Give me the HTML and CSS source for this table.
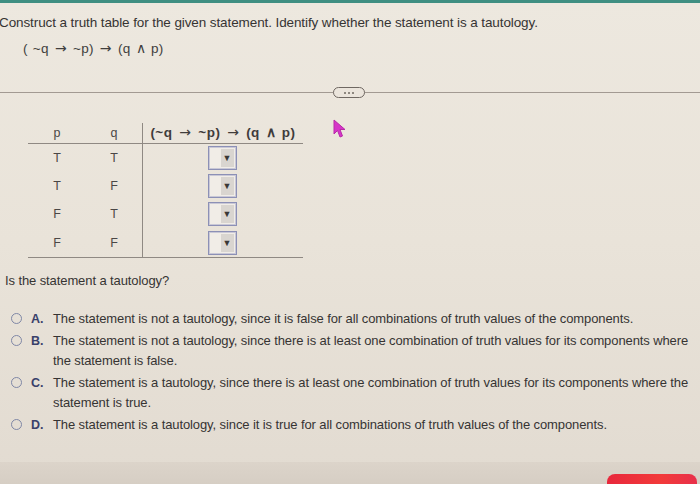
FILE: index.html
```html
<!DOCTYPE html>
<html>
<head>
<meta charset="utf-8">
<link rel="stylesheet" href="styles.css">
</head>
<body>
<div class="topbar"></div>
<div class="page">
  <p class="title">Construct a truth table for the given statement. Identify whether the statement is a tautology.</p>
  <p class="formula">( ~q <span class="ar">→</span> ~p) <span class="ar">→</span> (q ∧ p)</p>
  <div class="divider"><span class="pill"><i></i><i></i><i></i></span></div>
  <div class="table-wrap">
    <table class="truth">
      <thead>
        <tr><th class="c1">p</th><th class="c2">q</th><th class="c3">(~q <span class="ar">→</span> ~p) <span class="ar">→</span> (q ∧ p)</th></tr>
      </thead>
      <tbody>
        <tr><td>T</td><td>T</td><td class="c3"><span class="select"><span class="btn">▼</span></span></td></tr>
        <tr><td>T</td><td>F</td><td class="c3"><span class="select"><span class="btn">▼</span></span></td></tr>
        <tr><td>F</td><td>T</td><td class="c3"><span class="select"><span class="btn">▼</span></span></td></tr>
        <tr><td>F</td><td>F</td><td class="c3"><span class="select"><span class="btn">▼</span></span></td></tr>
      </tbody>
    </table>
    <svg class="cursor" width="14" height="20" viewBox="0 0 14 20"><path d="M1 1 L1 15 L4.5 11.5 L7 18 L9.5 17 L7 10.5 L12 10.5 Z" fill="#d634c8" stroke="#b82aa8" stroke-width="1"/></svg>
  </div>
  <p class="question">Is the statement a tautology?</p>
  <ul class="options">
    <li><span class="radio"></span><b>A.</b><span class="txt">The statement is not a tautology, since it is false for all combinations of truth values of the components.</span></li>
    <li><span class="radio"></span><b>B.</b><span class="txt">The statement is not a tautology, since there is at least one combination of truth values for its components where the statement is false.</span></li>
    <li><span class="radio"></span><b>C.</b><span class="txt">The statement is a tautology, since there is at least one combination of truth values for its components where the statement is true.</span></li>
    <li><span class="radio"></span><b>D.</b><span class="txt">The statement is a tautology, since it is true for all combinations of truth values of the components.</span></li>
  </ul>
</div>
<div class="footer"><span class="redbtn"></span></div>
</body>
</html>
```
FILE: styles.css
```css
html, body { margin: 0; padding: 0; }
body {
  width: 700px;
  height: 484px;
  overflow: hidden;
  background: linear-gradient(180deg, #ede8df 0%, #e9e3d9 50%, #e2dbd1 100%);
  font-family: "Liberation Sans", Arial, sans-serif;
  color: #363433;
  display: flex;
  flex-direction: column;
}
.topbar { height: 3px; background: #3f8f82; flex: none; }
.page { flex: 1; }
p { margin: 0; }
.title {
  margin: 12px 0 0 -1px;
  font-size: 13.5px;
  line-height: 16px;
  letter-spacing: -0.1px;
  white-space: nowrap;
}
.ar { font-family: "DejaVu Sans", sans-serif; font-size: 14px; font-weight: normal; line-height: 1; margin: 0 1px; }
.formula {
  margin: 10px 0 0 23px;
  font-size: 13.5px;
  line-height: 16px;
  height: 16px;
  letter-spacing: 0.3px;
  word-spacing: 1px;
  color: #403e3d;
}
.divider {
  margin-top: 35px;
  height: 1px;
  background: #a29a92;
  position: relative;
}
.pill {
  position: absolute;
  left: 333px;
  top: -5px;
  width: 30px;
  height: 9px;
  border: 1px solid #6f6862;
  border-radius: 6px;
  background: #ebe5dc;
  display: flex;
  justify-content: center;
  align-items: center;
  gap: 2px;
}
.pill i { width: 2px; height: 2px; background: #6f6862; border-radius: 50%; }
.table-wrap { position: relative; margin-top: 30px; height: 136px; }
.truth {
  margin-left: 28px;
  border-collapse: collapse;
  font-size: 12.5px;
  color: #4a4746;
}
.truth th {
  height: 20px;
  padding: 0;
  font-weight: normal;
  line-height: 16px;
  border-bottom: 1px solid #8f8983;
  vertical-align: middle;
}
.truth th.c3 { font-weight: bold; color: #3f3c3b; font-size: 13.5px; letter-spacing: 0.5px; word-spacing: 1.5px; white-space: nowrap; }
.truth .c1 { width: 58px; }
.truth .c2 { width: 56px; }
.truth .c3 { width: 160px; border-left: 1px solid #8f8983; }
.truth td {
  height: 28px;
  padding: 0;
  text-align: center;
  vertical-align: middle;
}
.truth tbody tr:last-child td { border-bottom: 1px solid #8f8983; height: 29px; }
.select {
  display: inline-flex;
  justify-content: flex-end;
  width: 27px;
  height: 22px;
  border: 1px solid #8c90b6;
  box-shadow: inset 0 0 0 1px #c9c8d6;
  background: #f1ede7;
  vertical-align: middle;
  box-sizing: content-box;
  margin-left: -2px;
}
.select .btn {
  width: 13px;
  margin: 2px;
  background: #d9d5d0;
  font-size: 9px;
  line-height: 18px;
  color: #3a3836;
  text-align: center;
}
.cursor { position: absolute; left: 333px; top: -4px; }
.question {
  margin: 14px 0 0 5px;
  font-size: 13px;
  line-height: 16px;
  letter-spacing: -0.1px;
}
.options { list-style: none; margin: 20px 0 0 0; padding: 0; display: flex; flex-direction: column; gap: 2px; }
.options li { display: flex; align-items: flex-start; font-size: 13px; line-height: 20px; }
.radio {
  flex: none;
  width: 9px;
  height: 9px;
  border: 1.5px solid #7f87a6;
  border-radius: 50%;
  margin: 4px 0 0 11px;
}
.options b { flex: none; width: 22px; margin-left: 9px; color: #39406a; font-size: 12.5px; }
.options .txt { width: 640px; letter-spacing: -0.1px; }
.footer {
  flex: none;
  height: 22px;
  background: linear-gradient(180deg, #dcd4ca 0%, #d6cec4 100%);
  display: flex;
  justify-content: flex-end;
  align-items: flex-end;
  padding-right: 3px;
}
.redbtn {
  width: 90px;
  height: 10px;
  border-radius: 8px 8px 0 0;
  background: linear-gradient(90deg, #e8283c, #f23a3a 60%, #e8304a);
}
```
